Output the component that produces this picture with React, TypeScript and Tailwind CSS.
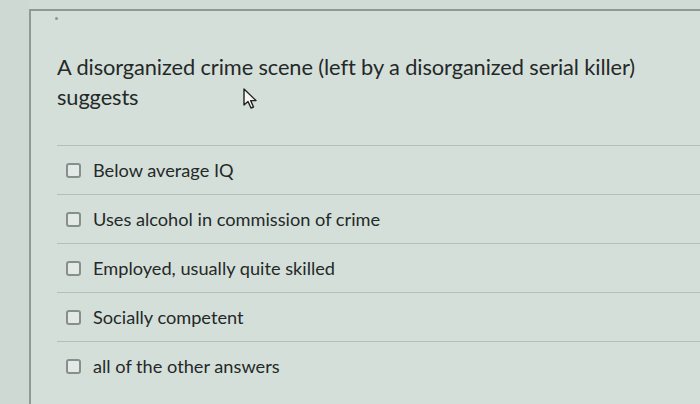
import React from "react";

const options = [
  "Below average IQ",
  "Uses alcohol in commission of crime",
  "Employed, usually quite skilled",
  "Socially competent",
  "all of the other answers",
];

export default function App() {
  return (
    <div
      className="relative w-[700px] h-[404px] overflow-hidden bg-[#d2dcd7] flex text-[#242928]"
      style={{ fontFamily: "Lato, 'Open Sans', sans-serif" }}
    >
      <div className="w-[29px] shrink-0 bg-[#cfd9d4]" />
      <div className="flex-1 mt-[9px] border-l-2 border-t-2 border-[#8f9a96] flex flex-col bg-[#d5dfda]">
        <div className="relative pl-[26px] pt-[41px] pb-[33px]">
          <span className="absolute left-[24px] top-[6px] w-[3px] h-[3px] rounded-full bg-[#8a9591]" />
          <p className="text-[21.8px] leading-[30px] tracking-[-0.1px]">
            A disorganized crime scene (left by a disorganized serial killer)
            <br />
            suggests
          </p>
        </div>
        <div className="flex flex-col ml-[26px] border-t border-[#b4beba]">
          {options.map((o, i) => (
            <div
              key={o}
              className={`flex items-center h-[49px] ${i < options.length - 1 ? "border-b border-[#b4beba]" : ""}`}
            >
              <span className="ml-[9px] w-[15px] h-[15px] rounded-[3px] border-2 border-[#868f8c] bg-[#e2e9e6] shrink-0" />
              <span className="ml-[12px] text-[18.2px] leading-none">{o}</span>
            </div>
          ))}
        </div>
      </div>
      <svg
        className="absolute left-[242px] top-[87px]"
        width="18"
        height="24"
        viewBox="0 0 18 24"
      >
        <path
          d="M2 2 L2 18 L6 14.5 L9 21 L11.5 20 L8.7 13.6 L14 13.6 Z"
          fill="#f4f7f5"
          stroke="#222"
          strokeWidth="1.4"
          strokeLinejoin="round"
        />
      </svg>
    </div>
  );
}
